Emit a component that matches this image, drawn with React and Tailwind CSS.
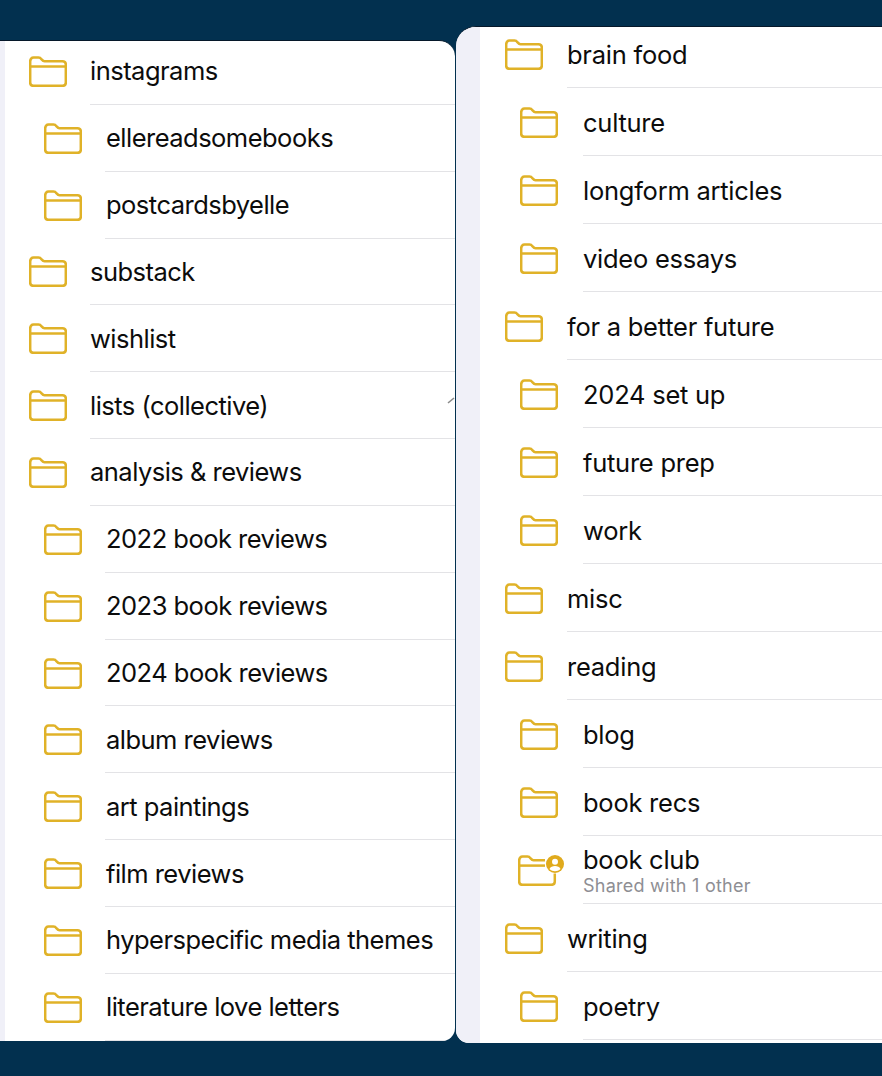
const LEFT_ROWS = [
  { name: 'instagrams' },
  { name: 'ellereadsomebooks', sub: true },
  { name: 'postcardsbyelle', sub: true },
  { name: 'substack' },
  { name: 'wishlist' },
  { name: 'lists (collective)' },
  { name: 'analysis & reviews' },
  { name: '2022 book reviews', sub: true },
  { name: '2023 book reviews', sub: true },
  { name: '2024 book reviews', sub: true },
  { name: 'album reviews', sub: true },
  { name: 'art paintings', sub: true },
  { name: 'film reviews', sub: true },
  { name: 'hyperspecific media themes', sub: true },
  { name: 'literature love letters', sub: true },
]

const RIGHT_ROWS = [
  { name: 'brain food' },
  { name: 'culture', sub: true },
  { name: 'longform articles', sub: true },
  { name: 'video essays', sub: true },
  { name: 'for a better future' },
  { name: '2024 set up', sub: true },
  { name: 'future prep', sub: true },
  { name: 'work', sub: true },
  { name: 'misc' },
  { name: 'reading' },
  { name: 'blog', sub: true },
  { name: 'book recs', sub: true },
  { name: 'book club', sub: true, shared: 'Shared with 1 other' },
  { name: 'writing' },
  { name: 'poetry', sub: true },
]

function FolderIcon() {
  return (
    <svg width="38" height="31" viewBox="0 0 38 31" fill="none" stroke="#e0b228" strokeWidth="2.5" className="shrink-0">
      <path d="M1.2 5.5V26.5C1.2 28.4 2.6 29.8 4.5 29.8H33.5C35.4 29.8 36.8 28.4 36.8 26.5V8.5C36.8 6.6 35.4 5.2 33.5 5.2H15.5C14.2 5.2 13.6 4.6 12.6 3.4C11.8 2.3 11 1.6 9.5 1.6H4.5C2.6 1.6 1.2 3 1.2 5.5Z" />
      <path d="M1.2 10.6H36.8" />
    </svg>
  )
}

function SharedFolderIcon() {
  return (
    <svg width="46" height="31" viewBox="0 0 46 31" fill="none" className="shrink-0 -ml-[2px]">
      <path d="M27 5.2H15.5C14.2 5.2 13.6 4.6 12.6 3.4C11.8 2.3 11 1.6 9.5 1.6H4.5C2.6 1.6 1.2 3 1.2 5.5V26.5C1.2 28.4 2.6 29.8 4.5 29.8H33.5C35.4 29.8 36.8 28.4 36.8 26.5V18.5" stroke="#e0b228" strokeWidth="2.5" />
      <path d="M1.2 10.6H27" stroke="#e0b228" strokeWidth="2.5" />
      <circle cx="37" cy="9" r="9" fill="#e0aa1c" />
      <circle cx="37" cy="6.8" r="3" fill="#fff" />
      <path d="M31.5 14C32.5 11.8 34.5 11 37 11C39.5 11 41.5 11.8 42.5 14C41 15.5 39 16.2 37 16.2C35 16.2 33 15.5 31.5 14Z" fill="#fff" />
    </svg>
  )
}

function FolderRow({ row, height, iconLeft, iconSub, text, subIndent }) {
  return (
    <div className={`flex items-stretch ${height}`}>
      <div className={`flex items-center ${row.sub ? iconSub : iconLeft}`}>
        {row.shared ? <SharedFolderIcon /> : <FolderIcon />}
      </div>
      <div className={`flex flex-1 min-w-0 flex-col justify-center border-b border-[#e3e3e6] ${text}`}>
        <div className={`text-[25.5px] font-[380] leading-[30px] text-[#0c0c0c] whitespace-nowrap ${row.sub ? subIndent : ''}`}>{row.name}</div>
        {row.shared && <div className="text-[18px] leading-[22px] tracking-[0.25px] text-[#8e8e93] whitespace-nowrap">{row.shared}</div>}
      </div>
    </div>
  )
}

export default function App() {
  return (
    <div className="flex h-[1076px] w-[882px] items-start overflow-hidden bg-[#02304f] font-['Inter',sans-serif]">
      {/* left pane */}
      <div className="relative mt-[40px] flex h-[1001px] w-[455px] overflow-hidden rounded-tr-[16px] rounded-br-[13px] border-t border-[#06182a] bg-white">
        <div className="w-[5px] shrink-0 bg-[#f0f0f8]" />
        <div className="-mt-[3px] flex-1 min-w-0">
          {LEFT_ROWS.map(row => (
            <FolderRow key={row.name} row={row} height="h-[66.85px]" iconLeft="w-[85px] pl-[24px]" iconSub="w-[100px] pl-[39px]" text="pt-[1px] tracking-[-0.52px]" subIndent="pl-px" />
          ))}
        </div>
        <svg width="8" height="8" viewBox="0 0 8 8" className="absolute right-0 top-[355px]">
          <path d="M1 7L7 2" stroke="#8a8a8a" strokeWidth="1.6" />
        </svg>
      </div>

      {/* right pane */}
      <div className="ml-px mt-[26px] flex h-[1017px] flex-1 min-w-0 overflow-hidden rounded-tl-[20px] rounded-bl-[13px] border-t border-[#06182a] bg-white">
        <div className="w-[24px] shrink-0 bg-[#f0f0f8]" />
        <div className="-mt-[7px] flex-1 min-w-0">
          {RIGHT_ROWS.map(row => (
            <FolderRow key={row.name} row={row} height="h-[68px]" iconLeft="w-[87px] pl-[25px]" iconSub="w-[103px] pl-[40px]" text="pt-[2px] tracking-[-0.25px]" subIndent="" />
          ))}
        </div>
      </div>
    </div>
  )
}
